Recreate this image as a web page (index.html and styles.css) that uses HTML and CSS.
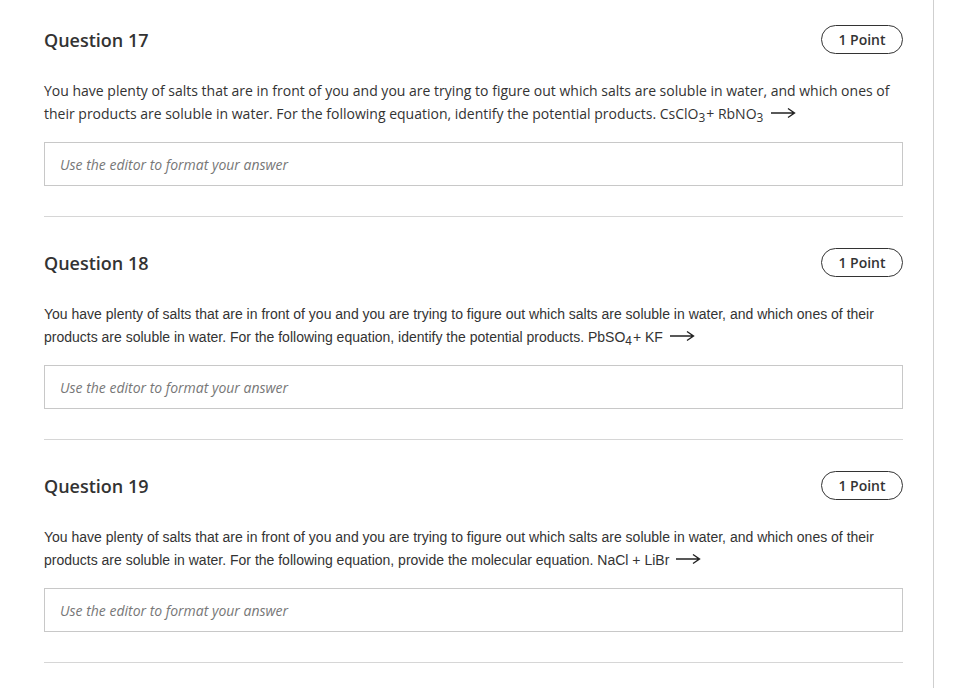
FILE: index.html
```html
<!DOCTYPE html>
<html>
<head>
<meta charset="utf-8">
<link rel="stylesheet" href="styles.css">
</head>
<body>
<div class="page">
  <section class="question">
    <div class="q-head">
      <h2 class="q-title">Question 17</h2>
      <span class="points">1 Point</span>
    </div>
    <p class="q-text q-text-open">You have plenty of salts that are in front of you and you are trying to figure out which salts are soluble in water, and which ones of their products are soluble in water. For the following equation, identify the potential products. CsClO<sub>3</sub>+ RbNO<sub>3</sub> <svg class="arrow" width="26" height="12" viewBox="0 0 26 12"><path d="M1 6H24M18 1.5L24.5 6L18 10.5" fill="none" stroke="#222" stroke-width="1.4"/></svg></p>
    <div class="answer">Use the editor to format your answer</div>
  </section>
  <section class="question">
    <div class="q-head">
      <h2 class="q-title">Question 18</h2>
      <span class="points">1 Point</span>
    </div>
    <p class="q-text q-text-arial">You have plenty of salts that are in front of you and you are trying to figure out which salts are soluble in water, and which ones of their products are soluble in water. For the following equation, identify the potential products. PbSO<sub>4</sub>+ KF <svg class="arrow" width="26" height="12" viewBox="0 0 26 12"><path d="M1 6H24M18 1.5L24.5 6L18 10.5" fill="none" stroke="#222" stroke-width="1.4"/></svg></p>
    <div class="answer">Use the editor to format your answer</div>
  </section>
  <section class="question">
    <div class="q-head">
      <h2 class="q-title">Question 19</h2>
      <span class="points">1 Point</span>
    </div>
    <p class="q-text q-text-arial">You have plenty of salts that are in front of you and you are trying to figure out which salts are soluble in water, and which ones of their products are soluble in water. For the following equation, provide the molecular equation. NaCl + LiBr <svg class="arrow" width="26" height="12" viewBox="0 0 26 12"><path d="M1 6H24M18 1.5L24.5 6L18 10.5" fill="none" stroke="#222" stroke-width="1.4"/></svg></p>
    <div class="answer">Use the editor to format your answer</div>
  </section>
</div>
</body>
</html>
```
FILE: styles.css
```css
* { box-sizing: border-box; }
html, body { margin: 0; padding: 0; background: #fff; }
body { font-family: "Open Sans", sans-serif; color: #333; overflow: hidden; }
.page {
  width: 934px;
  min-height: 688px;
  border-right: 1px solid #cfcfcf;
  padding: 25px 30px 0 44px;
}
.question {
  padding-bottom: 30px;
  border-bottom: 1px solid #d6d6d6;
  margin-bottom: 31px;
}
.q-head {
  display: flex;
  justify-content: space-between;
  align-items: center;
  height: 29px;
}
.q-title {
  margin: 0;
  font-size: 18px;
  font-weight: 600;
  color: #333;
}
.points {
  height: 29px;
  width: 82px;
  border: 1px solid #333;
  border-radius: 15px;
  display: flex;
  align-items: center;
  justify-content: center;
  font-size: 14px;
  font-weight: 600;
  color: #333;
}
.q-text {
  margin: 25px 0 0;
  font-size: 14px;
  line-height: 23px;
  color: #333;
}
.q-text-open { font-family: "Open Sans", sans-serif; }
.q-text-arial { font-family: "Liberation Sans", Arial, sans-serif; color: #333; margin-top: 26px; }
.q-text sub { font-size: 0.85em; vertical-align: -3px; line-height: 0; margin-right: 1px; }
.arrow { vertical-align: 0; margin-left: 2px; }
.answer {
  margin-top: 17px;
  height: 44px;
  border: 1px solid #c8c8c8;
  padding: 0 15px;
  display: flex;
  align-items: center;
  font-style: italic;
  font-size: 14px;
  color: #777;
}
.q-text-arial + .answer { margin-top: 16px; }
```
